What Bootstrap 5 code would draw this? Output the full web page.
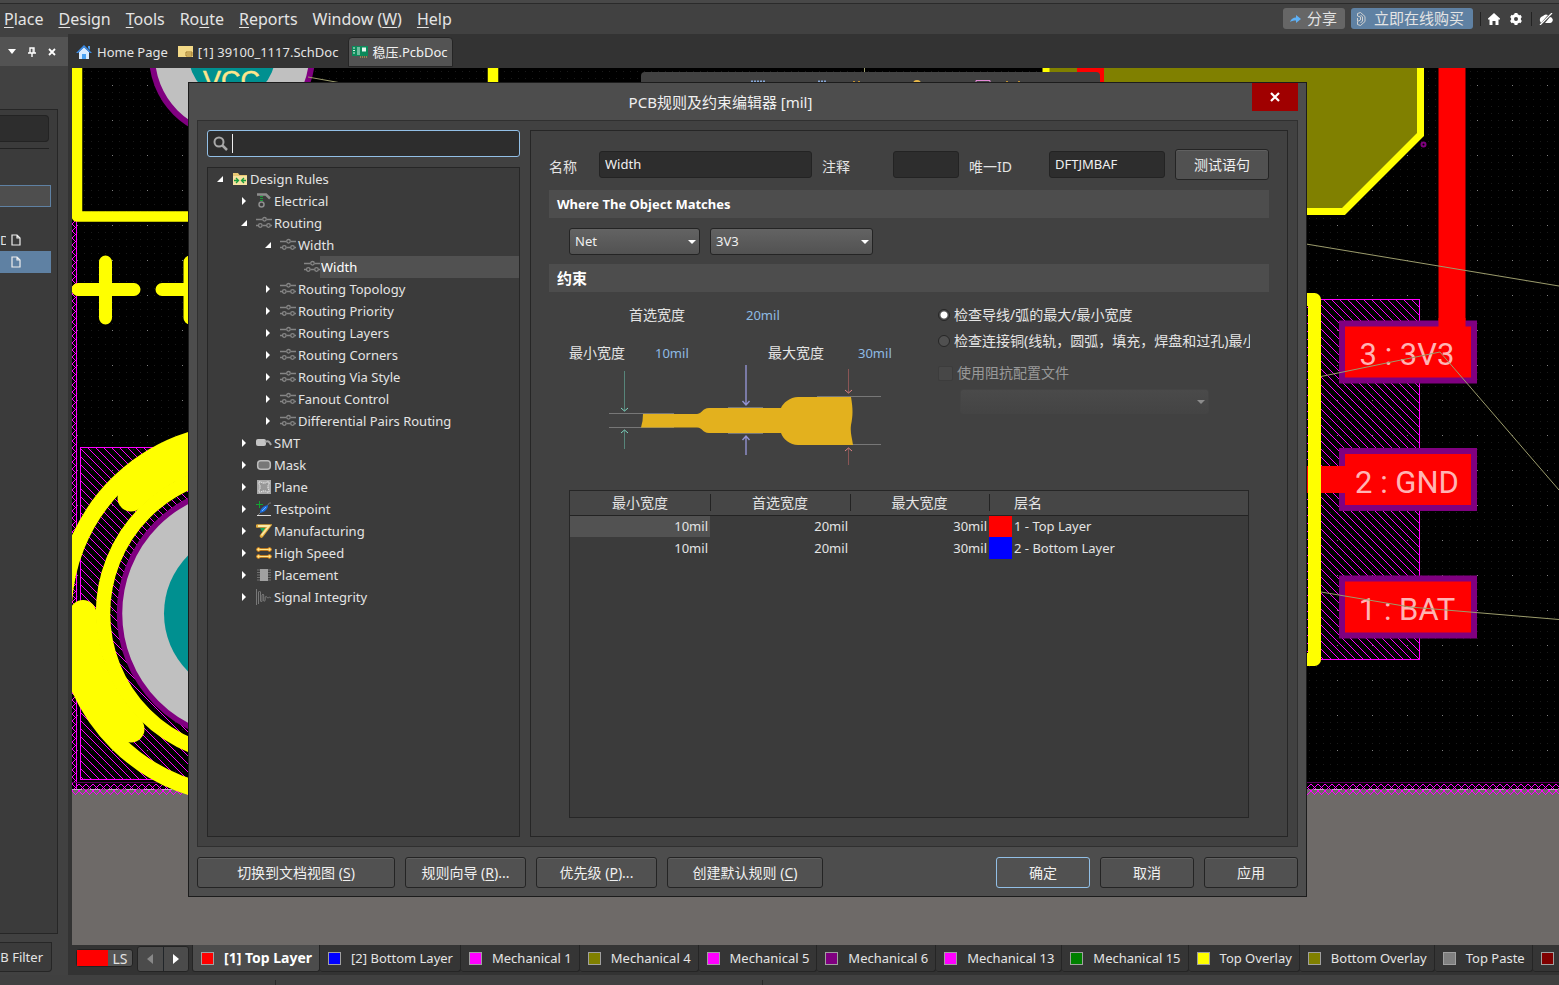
<!DOCTYPE html>
<html lang="zh-CN">
<head>
<meta charset="utf-8">
<meta name="viewport" content="width=device-width, initial-scale=1">
<title>PCB规则及约束编辑器</title>
<link href="https://cdn.jsdelivr.net/npm/bootstrap@5.3.0/dist/css/bootstrap.min.css" rel="stylesheet">
<style>
  :root { --ink:#e4e4e4; --line:#262626; --chrome:#414141; --deep:#333; --panel:#3b3b3b; --raised:#4d4d4d; --steel:#5f81a3; }
  body { font-family:"Noto Sans","Noto Sans CJK SC",sans-serif; font-size:13px; line-height:20px; color:var(--ink); background:var(--deep); }
  a { color:inherit; text-decoration:none; }
  .zh { font-size:14px; }
  .menubar { height:34px; background:var(--chrome); border-top:3px solid #484848; box-shadow:inset 0 1px #2a2a2a; font-size:16px; padding:0 6px 0 4px; }
  .menubar .menu-list { gap:15px; }
  .pill { height:21px; border:0; border-radius:3px; color:var(--ink); background:#666; padding:0 8px 0 7px; font-size:15px; line-height:21px; gap:6px; }
  .pill-buy { background:var(--steel); padding:0 9px 0 4px; gap:7px; margin-left:6px; }
  .bar-sep { width:1px; height:14px; background:#222; margin:0 7px; }
  .side { width:68px; background:var(--chrome); }
  .side-head { height:29px; margin-top:3px; background:#535353; }
  .side-body { width:58px; margin:43px 0 8px; padding-top:5px; background:var(--panel); border:1px solid var(--line); border-left:0; }
  .side-body input { display:block; height:27px; width:49px; background:#2d2d2d; border:1px solid #232323; border-left:0; border-radius:0 4px 4px 0; }
  .side-rule { height:1px; margin:6px 8px 0 0; background:#222; }
  .side-pick { width:51px; height:22px; background:#4e4e4e; border:1px solid var(--steel); border-left:0; margin:36px 0 22px; }
  .side-row { width:51px; height:22px; padding-left:11px; }
  .side-name { width:6px; margin-left:-11px; margin-right:5px; }
  .side-tab { width:52px; height:30px; margin-bottom:3px; background:var(--panel); border:1px solid var(--line); border-radius:0 0 4px 0; border-left:0; white-space:nowrap; }
  .doc-tabs { height:34px; padding:3px 0 0 8px; background:var(--deep); }
  .doc-tab { height:30px; gap:5px; margin-right:10px; }
  .doc-tab.on { background:#535353; border:1px solid #252525; border-radius:4px 4px 0 0; padding:0 4px 0 3px; gap:4px; color:#f2f2f2; }
  .board { margin-left:4px; min-height:0; background:#6e6a68; }
  .board svg { display:block; width:100%; height:100%; }
  .layers { height:30px; margin-left:4px; padding-left:4px; background:var(--deep); }
  .ls-box { height:18px; margin-top:4px; width:57px; border:1px solid #222; border-radius:3px; background:#555; line-height:17px; }
  .ls-box i { width:31px; background:#f00; }
  .stepper { width:52px; height:26px; margin:1px 3px 0 4px; background:#4b4b4b; border:1px solid #242424; border-radius:3px; }
  .stepper button { display:flex; align-items:center; justify-content:center; background:none; border:0; color:#fff; }
  .layer-tab { height:27px; padding:0 7px 0 8px; gap:10px; border:1px solid #252525; border-top:0; border-left:0; border-radius:0 0 3px 3px; background:#353535; white-space:nowrap; flex:none; }
  .layer-tab.on { background:#4c4c4c; color:#fff; font-weight:700; border-left:1px solid #252525; font-size:14px; }
  .chip { width:13px; height:13px; border:1px solid #a0a0a0; }
  .status { height:10px; background:#404040; }
  .status i { width:1px; margin-top:5px; background:#2a2a2a; }

  .dlg { position:absolute; left:188px; right:252px; top:82px; bottom:88px; background:var(--raised); border:1px solid #1c1c1c; padding:0 8px 8px; }
  .dlg-head { height:37px; padding-right:54px; }
  .dlg-title { font-size:15px; color:#f0f0f0; }
  .dlg-close { position:absolute; right:8px; top:0; width:46px; height:28px; background:#a00000; border:0; display:flex; align-items:center; justify-content:center; }
  .dlg-frame { background:var(--chrome); border:1px solid #303030; padding:9px; gap:10px; min-height:0; }
  .left-col { width:313px; gap:10px; }
  .search { height:27px; background:#2d2d2d; border:1px solid #92bfe6; border-radius:3px; padding-left:5px; gap:4px; }
  .search input { background:none; border:0; outline:0; color:#fff; min-width:0; }
  .caret { width:1px; height:19px; background:#eee; }
  .tree { background:var(--panel); border:1px solid var(--line); }
  .tree ul { list-style:none; margin:0; padding-left:24px; }
  .tree > ul { padding-left:8px; }
  .node { height:22px; }
  .node svg { flex:none; }
  .node .twig { width:8px; height:8px; margin:0 8px 0 0; }
  .node a { padding-left:2px; white-space:nowrap; flex-grow:1; line-height:22px; }
  .node a.sel { background:#515151; color:#fff; padding-left:1px; }
  .props { border:1px solid var(--line); padding:18px; }
  .f-row { gap:10px; }
  .fld { background:#2d2d2d; border:1px solid #232323; border-radius:3px; height:27px; color:#f0f0f0; padding:0 5px 1px; min-width:0; }
  .f-row label { padding-top:4px; flex:none; }
  .btn-flat { height:31px; padding:0; border:1px solid #242424; border-radius:3px; background:#515151; box-shadow:inset 0 1px #606060; color:#f0f0f0; font-size:14px; line-height:20px; }
  .btn-flat:hover { background:#5a5a5a; color:#fff; }
  .btn-ok { border-color:#92bfe6; box-shadow:none; }
  .sect { height:28px; margin:0; padding-left:8px; background:var(--raised); color:#fff; font-size:13px; line-height:28px; font-weight:700; }
  .sect.zh { font-size:15px; }
  .pick { height:27px; appearance:none; border:1px solid #242424; border-radius:3px; color:#f0f0f0; padding:0 5px 1px;
    background:url("data:image/svg+xml,%3Csvg xmlns='http://www.w3.org/2000/svg' width='8' height='4'%3E%3Cpath d='M0 0h8L4 4z' fill='%23fff'/%3E%3C/svg%3E") no-repeat right 3px center, linear-gradient(#636363,#525252); }
  .pick:disabled { height:25px; width:249px; margin:5px 0 0 22px; opacity:1; border-color:#444;
    background:url("data:image/svg+xml,%3Csvg xmlns='http://www.w3.org/2000/svg' width='8' height='4'%3E%3Cpath d='M0 0h8L4 4z' fill='%238c8c8c'/%3E%3C/svg%3E") no-repeat right 3px center, linear-gradient(#4a4a4a,#444); }
  .widths { width:369px; }
  .w-row { height:22px; }
  .w-row input { background:none; border:0; padding:0; color:#8fbbe4; width:44px; }
  .checks { min-width:0; overflow:hidden; white-space:nowrap; margin-right:19px; }
  .dot { appearance:none; width:12px; height:12px; margin:0; border-radius:50%; background:#505050; border:1px solid #262626; flex:none; }
  .dot:checked { background:radial-gradient(circle,#fff 0 3px,#505050 4px); }
  .tick { appearance:none; width:15px; height:15px; margin:0; border-radius:2px; background:#474747; border:1px solid #3c3c3c; flex:none; }
  .opt { height:22px; gap:4px; }
  .grid-box { margin:0 20px; border:1px solid var(--line); background:var(--panel); }
  .grid-box table { width:100%; table-layout:fixed; border-collapse:collapse; }
  .grid-box th { position:relative; height:24px; padding:0; font-weight:400; font-size:14px; text-align:center; background:#464646; border-bottom:1px solid #232323; line-height:22px; }
  .grid-box th + th { background:linear-gradient(#232323,#232323) no-repeat left center/1px 17px #464646; }
  .grid-box td { height:22px; padding:0 2px; text-align:right; line-height:21px; }
  .grid-box td:last-child, .grid-box th:last-child { text-align:left; padding-left:2px; }
  .grid-box th:last-child { background:#464646; }
  .dlg-foot { padding-top:10px; gap:10px; }
  .b-xl { width:198px; } .b-lg { width:156px; } .b-md { width:121px; } .b-sm { width:94px; }
  u { text-underline-offset:2px; }
</style>
</head>
<body class="vh-100 d-flex flex-column overflow-hidden position-relative">

<svg width="0" height="0" class="position-absolute" aria-hidden="true">
  <symbol id="open" viewBox="0 0 8 8"><path d="M7 1v6H1z" fill="#fff"/></symbol>
  <symbol id="shut" viewBox="0 0 8 8"><path d="M2 0L6 4 2 8z" fill="#fff"/></symbol>
  <symbol id="net" viewBox="0 0 16 16"><g fill="none" stroke="#858585" stroke-width="1.300"><path d="M0 4.500h6M11 4.500h5M0 10.500h2M6.500 10.500h4M14.500 10.500h1.500"/><circle cx="8.500" cy="4.300" r="1.800"/><circle cx="4.300" cy="10.500" r="1.800"/><circle cx="12.500" cy="10.500" r="1.800"/></g></symbol>
  <symbol id="doc" viewBox="0 0 10 12"><path d="M1 1h5l3 3v7H1zM6 1v3h3" fill="none" stroke="#eee" stroke-width="1.200"/></symbol>
</svg>

<header class="menubar d-flex align-items-center justify-content-between flex-shrink-0">
  <nav class="menu-list d-flex">
    <a href="#"><u>P</u>lace</a><a href="#"><u>D</u>esign</a><a href="#"><u>T</u>ools</a><a href="#">Ro<u>u</u>te</a><a href="#"><u>R</u>eports</a><a href="#">Window (<u>W</u>)</a><a href="#"><u>H</u>elp</a>
  </nav>
  <div class="d-flex align-items-center">
    <button class="pill d-flex align-items-center"><svg width="11" height="10" viewBox="0 0 11 10"><path d="M0 8c1-3 3-4.500 6-4.500V1l5 4-5 4V6.500C3 6.500 2 7 0 8z" fill="#5eb0f5"/></svg>分享</button>
    <button class="pill pill-buy d-flex align-items-center"><svg width="12" height="14" viewBox="0 0 12 14"><g fill="none" stroke="#d0d0d0"><path d="M2.500 1.500l3-1 4.500 4v5l-4.500 4-3-1v-3l3-1.500v-3l-3-1z"/><path d="M2.500 6v3M5.500 3l2 2v4l-2 2"/></g></svg>立即在线购买</button>
    <i class="bar-sep"></i>
    <svg width="12" height="12" viewBox="0 0 12 12"><path d="M6 0l6 5.500v1H10.500V12h-3V8h-3v4h-3V6.500H0v-1z" fill="#fff"/></svg>
    <svg class="ms-2" width="16" height="14" viewBox="-2 -1 16 14"><g transform="translate(6 6)"><circle r="3.500" fill="none" stroke="#fff" stroke-width="3"/><g stroke="#fff" stroke-width="3"><path d="M0-6v2M0 4v2M-5.200-3l1.700 1M3.500 2l1.700 1M-5.200 3l1.700-1M3.500-2l1.700-1"/></g></g></svg>
    <i class="bar-sep"></i>
    <svg width="14" height="12" viewBox="0 0 14 12"><path d="M1 8a4 4 0 013-5 4 4 0 015-1L2 10zM6 10l5-6a3 3 0 012 5 3 3 0 01-2 1z" fill="#fff"/><path d="M1 12L13 0" stroke="#fff" stroke-width="1.200"/></svg>
  </div>
</header>

<div class="d-flex flex-grow-1" style="min-height:0">
  <aside class="side d-flex flex-column flex-shrink-0">
    <div class="side-head d-flex align-items-center justify-content-end gap-2 pe-2">
      <svg width="8" height="5" viewBox="0 0 8 5"><path d="M0 0h8L4 5z" fill="#fff"/></svg>
      <svg class="mx-1" width="8" height="10" viewBox="0 0 8 10"><path d="M2 1h4v5H2zM0 6h8M4 6v4" stroke="#fff" fill="none" stroke-width="1.400"/><path d="M5 1v5" stroke="#fff"/></svg>
      <svg class="me-1" width="8" height="8" viewBox="0 0 8 8"><path d="M1 1l6 6M7 1L1 7" stroke="#fff" stroke-width="1.800"/></svg>
    </div>
    <div class="side-body flex-grow-1 overflow-hidden">
      <input type="text" aria-label="Mask">
      <div class="side-rule"></div>
      <div class="side-pick"></div>
      <div class="side-row d-flex align-items-center"><span class="side-name overflow-hidden">Dc</span><svg width="10" height="12"><use href="#doc"/></svg></div>
      <div class="side-row d-flex align-items-center" style="background:#5f81a3"><svg width="10" height="12"><use href="#doc"/></svg></div>
    </div>
    <div class="side-tab d-flex align-items-center justify-content-end overflow-hidden pe-2"><a href="#">PCB Filter</a></div>
  </aside>

  <main class="d-flex flex-column flex-grow-1" style="min-width:0">
    <nav class="doc-tabs d-flex flex-shrink-0">
      <a href="#" class="doc-tab d-flex align-items-center"><svg width="16" height="16" viewBox="0 0 16 16"><path d="M3 8v7h10V8L8 3z" fill="#d9ecff"/><path d="M12 2h2v4l-2-2z" fill="#4d9bea"/><path d="M8 1L0 9h2l6-5.500L14 9h2z" fill="#3b8be6"/><path d="M6 10h4v5H6z" fill="#4da3f2"/></svg>Home Page</a>
      <a href="#" class="doc-tab d-flex align-items-center"><svg width="15" height="12" viewBox="0 0 15 12"><path d="M0 0h15v11H0z" fill="#f3d987"/><path d="M8 6h6v4H8zM9 8h5" fill="none" stroke="#a07a2c"/></svg>[1] 39100_1117.SchDoc</a>
      <a href="#" class="doc-tab on d-flex align-items-center"><svg width="16" height="12" viewBox="0 0 16 12"><path d="M0 0h16v10H0z" fill="#0c8a5a"/><path d="M10 1.500h4v4h-4z" fill="#e8f5ee"/><path d="M1 2h2M1 4.500h2M1 7h2M5 2h3M5 4h3M5 6h3M5 8h3" stroke="#d5efe2"/><path d="M8 11h7" stroke="#d9c34b" stroke-dasharray="1 1"/></svg><span>稳压.PcbDoc</span></a>
    </nav>

    <div class="board flex-grow-1 overflow-hidden">
      <svg viewBox="72 68 1487 877" preserveAspectRatio="xMinYMin slice" role="img" aria-label="PCB">
        <defs>
          <pattern id="fine" x="112" y="85" width="7" height="7" patternUnits="userSpaceOnUse"><rect width="1" height="1" fill="#1a1a1a"/></pattern>
          <pattern id="coarse" x="112" y="85" width="35" height="35" patternUnits="userSpaceOnUse"><rect width="1" height="1" fill="#808080"/></pattern>
          <pattern id="hatch" width="8" height="8" patternUnits="userSpaceOnUse"><path d="M-1-1l10 10M-1 7l2 2M7-1l2 2" stroke="#f0f"/></pattern>
          <pattern id="cross" x="72" y="784" width="7" height="7" patternUnits="userSpaceOnUse"><path d="M0 0l7 7M7 0L0 7" stroke="#f0f"/></pattern>
        </defs>
        <path d="M72 68H1559V789H72z"/>
        <path d="M72 68H1559V784H72z" fill="url(#fine)"/>
        <path d="M72 68H1559V784H72z" fill="url(#coarse)"/>
        <rect x="72" y="221" width="5" height="568" fill="url(#cross)"/>
        <path d="M76.500 221V789" stroke="#f0f"/>
        <rect x="72" y="784" width="1487" height="11" fill="url(#cross)"/>
        <path d="M72 782.500H1559" stroke="#5a005a"/><path d="M72 789.500H1559" stroke="#c9a0c9" stroke-dasharray="10 8"/>
        <path d="M493 60V216.500H77V60" fill="none" stroke="#ff0" stroke-width="10.500" stroke-linejoin="round"/>
        <circle cx="232" cy="56" r="80" fill="#c0c0c0" stroke="#800080" stroke-width="6"/>
        <circle cx="232" cy="56" r="43" fill="#009090"/>
        <text x="203" y="90" font-family="Liberation Sans" font-size="27" fill="#ffe68c" stroke="#ffe68c" stroke-width=".5">VCC</text>
        <path d="M308 77l50 9" stroke="#9c9c6c"/>
        <path d="M78 289.500h56M105.500 262v56M162 289.500h56M190 262v56" stroke="#ff0" stroke-width="13" stroke-linecap="round"/>
        <rect x="80.500" y="447.500" width="300" height="332" fill="url(#hatch)" stroke="#f0f"/>
        <g fill="none" stroke="#ff0">
          <circle cx="246" cy="613.500" r="182.500" stroke-width="16.500"/>
          <circle cx="246" cy="613.500" r="143" stroke-width="14.500"/>
          <path d="M131 498A163 163 0 01246 450.500M83 613.500A163 163 0 00131 729" stroke-width="27" stroke-linecap="round"/>
        </g>
        <circle cx="246" cy="613.500" r="126.500" fill="#c0c0c0" stroke="#800080" stroke-width="5.500"/>
        <circle cx="246" cy="613.500" r="82" fill="#009090"/>

        <path d="M1046 50H1420.500V134.500L1343.500 211.500H1046z" fill="#808000" stroke="#ff0" stroke-width="7"/>
        <path d="M1077 68h27v14h-27zM1438.500 68h27v262h-27z" fill="red"/>
        <circle cx="1423.500" cy="144.500" r="2" fill="none" stroke="#800080" stroke-width="2"/>
        <path d="M864.500 68v5" stroke="#9c9c6c"/>
        <rect x="641" y="72" width="459" height="20" rx="4" fill="#414141"/>
        <g fill="none"><path d="M751 81.500h14M818 81.500h9" stroke="#88a8d8" stroke-width="2" stroke-dasharray="2 1"/><path d="M976 84v-3.500h14v3.500" stroke="#e58ad8"/><path d="M853 81.500h8M1006 81.500h5M1018 81.500h5" stroke="#c09030" stroke-dasharray="2 3"/></g><circle cx="917" cy="84" r="4" fill="#e8b84a"/>
        <path d="M1300 243l259 43" stroke="#9c9c6c"/>
        <rect x="1300.500" y="299.500" width="119" height="360" fill="url(#hatch)" stroke="#f0f"/>
        <path d="M1300 466h50v27h-50z" fill="red"/>
        <path d="M1300 299.500h14.500V659.500H1300" fill="none" stroke="#ff0" stroke-width="13" stroke-linejoin="round"/>
        <g fill="red" stroke="#800080" stroke-width="6"><rect x="1342" y="323.500" width="132" height="57"/><rect x="1342" y="451" width="132" height="57"/><rect x="1342" y="578.500" width="132" height="57"/></g>
        <path d="M1438.500 318h27v14h-27zM1336 466h12v27h-12z" fill="red"/>
        <g font-family="Roboto, Liberation Sans" font-size="31" fill="#ffb4b4" text-anchor="middle"><text x="1407" y="365">3 : 3V3</text><text x="1407" y="493">2 : GND</text><text x="1407" y="620">1 : BAT</text></g>
        <path d="M1321 376.500L1440 352l119 138M1321 592l89 15 149 12.500" fill="none" stroke="#9c9c6c"/>
      </svg>
    </div>

    <nav class="layers d-flex flex-shrink-0">
      <div class="ls-box d-flex flex-shrink-0"><i></i><span class="flex-grow-1 text-center zh">LS</span></div>
      <div class="stepper d-flex flex-shrink-0">
        <button class="flex-fill p-0" aria-label="prev"><svg width="6" height="10" viewBox="0 0 6 10"><path d="M6 0v10L0 5z" fill="#888"/></svg></button>
        <button class="flex-fill p-0 border-start border-dark" aria-label="next"><svg width="6" height="10" viewBox="0 0 6 10"><path d="M0 0v10l6-5z" fill="#fff"/></svg></button>
      </div>
      <a href="#" class="layer-tab on d-flex align-items-center"><i class="chip" style="background:#f00"></i>[1] Top Layer</a>
      <a href="#" class="layer-tab d-flex align-items-center"><i class="chip" style="background:#00f"></i>[2] Bottom Layer</a>
      <a href="#" class="layer-tab d-flex align-items-center"><i class="chip" style="background:#f0f"></i>Mechanical 1</a>
      <a href="#" class="layer-tab d-flex align-items-center"><i class="chip" style="background:#808000"></i>Mechanical 4</a>
      <a href="#" class="layer-tab d-flex align-items-center"><i class="chip" style="background:#f0f"></i>Mechanical 5</a>
      <a href="#" class="layer-tab d-flex align-items-center"><i class="chip" style="background:#800080"></i>Mechanical 6</a>
      <a href="#" class="layer-tab d-flex align-items-center"><i class="chip" style="background:#f0f"></i>Mechanical 13</a>
      <a href="#" class="layer-tab d-flex align-items-center"><i class="chip" style="background:#008000"></i>Mechanical 15</a>
      <a href="#" class="layer-tab d-flex align-items-center"><i class="chip" style="background:#ff0"></i>Top Overlay</a>
      <a href="#" class="layer-tab d-flex align-items-center"><i class="chip" style="background:#808000"></i>Bottom Overlay</a>
      <a href="#" class="layer-tab d-flex align-items-center"><i class="chip" style="background:#808080"></i>Top Paste</a>
      <a href="#" class="layer-tab d-flex align-items-center"><i class="chip" style="background:#800000"></i></a>
    </nav>
  </main>
</div>
<footer class="status flex-shrink-0 d-flex"><i style="margin-left:275px"></i><i style="margin-left:486px"></i></footer>

<section class="dlg d-flex flex-column" role="dialog" aria-labelledby="dlgTitle">
  <div class="dlg-head d-flex align-items-center justify-content-center">
    <span class="dlg-title" id="dlgTitle">PCB规则及约束编辑器 [mil]</span>
    <button class="dlg-close" aria-label="关闭"><svg width="10" height="10" viewBox="0 0 10 10"><path d="M1 1l8 8M9 1L1 9" stroke="#fff" stroke-width="2.200"/></svg></button>
  </div>
  <div class="dlg-frame d-flex flex-grow-1">
    <div class="left-col d-flex flex-column flex-shrink-0">
      <label class="search d-flex align-items-center"><svg width="15" height="15" viewBox="0 0 15 15"><circle cx="6" cy="6" r="4.500" fill="none" stroke="#a8a8a8" stroke-width="2"/><path d="M9.500 9.500L14 14" stroke="#a8a8a8" stroke-width="2.500"/></svg><i class="caret"></i><input type="text" class="flex-grow-1 p-0" aria-label="搜索"></label>
      <div class="tree flex-grow-1 overflow-hidden">
        <ul>
          <li>
            <div class="node d-flex align-items-center"><svg class="twig"><use href="#open"/></svg><svg width="16" height="16" viewBox="0 0 16 16"><path d="M1 2h5l1.500 2H15v10H1z" fill="#e9c873"/><path d="M1 5h14v9H1z" fill="#f8e2a0"/><path d="M2 9.500h4M4 7l2.500 2.500L4 12M14 9.500H10M12 7L9.500 9.500l2.500 2.500" stroke="#1a9a3a" stroke-width="1.300" fill="none"/></svg><a href="#">Design Rules</a></div>
            <ul>
              <li><div class="node d-flex align-items-center"><svg class="twig"><use href="#shut"/></svg><svg width="16" height="16" viewBox="0 0 16 16"><path d="M1 1.500h9l4 4" stroke="#8e8e8e" stroke-width="2.500" fill="none"/><path d="M5.500 3v5" stroke="#1e9a3c" stroke-width="3" stroke-dasharray="1 1"/><circle cx="5.500" cy="11.500" r="2.500" fill="none" stroke="#8e8e8e" stroke-width="1.500"/></svg><a href="#">Electrical</a></div></li>
              <li><div class="node d-flex align-items-center"><svg class="twig"><use href="#open"/></svg><svg width="16" height="16"><use href="#net"/></svg><a href="#">Routing</a></div>
                <ul>
                  <li><div class="node d-flex align-items-center"><svg class="twig"><use href="#open"/></svg><svg width="16" height="16"><use href="#net"/></svg><a href="#">Width</a></div>
                    <ul><li><div class="node d-flex align-items-center"><svg class="twig"></svg><svg width="16" height="16"><use href="#net"/></svg><a href="#" class="sel">Width</a></div></li></ul>
                  </li>
                  <li><div class="node d-flex align-items-center"><svg class="twig"><use href="#shut"/></svg><svg width="16" height="16"><use href="#net"/></svg><a href="#">Routing Topology</a></div></li>
                  <li><div class="node d-flex align-items-center"><svg class="twig"><use href="#shut"/></svg><svg width="16" height="16"><use href="#net"/></svg><a href="#">Routing Priority</a></div></li>
                  <li><div class="node d-flex align-items-center"><svg class="twig"><use href="#shut"/></svg><svg width="16" height="16"><use href="#net"/></svg><a href="#">Routing Layers</a></div></li>
                  <li><div class="node d-flex align-items-center"><svg class="twig"><use href="#shut"/></svg><svg width="16" height="16"><use href="#net"/></svg><a href="#">Routing Corners</a></div></li>
                  <li><div class="node d-flex align-items-center"><svg class="twig"><use href="#shut"/></svg><svg width="16" height="16"><use href="#net"/></svg><a href="#">Routing Via Style</a></div></li>
                  <li><div class="node d-flex align-items-center"><svg class="twig"><use href="#shut"/></svg><svg width="16" height="16"><use href="#net"/></svg><a href="#">Fanout Control</a></div></li>
                  <li><div class="node d-flex align-items-center"><svg class="twig"><use href="#shut"/></svg><svg width="16" height="16"><use href="#net"/></svg><a href="#">Differential Pairs Routing</a></div></li>
                </ul>
              </li>
              <li><div class="node d-flex align-items-center"><svg class="twig"><use href="#shut"/></svg><svg width="16" height="16" viewBox="0 0 16 16"><rect y="4" width="10" height="7" rx="2" fill="#c4c4c4"/><path d="M9 7c4-2 5 1 6 3" fill="none" stroke="#a5a5a5" stroke-width="2"/></svg><a href="#">SMT</a></div></li>
              <li><div class="node d-flex align-items-center"><svg class="twig"><use href="#shut"/></svg><svg width="16" height="16" viewBox="0 0 16 16"><rect x="1.700" y="3.700" width="12.600" height="8.600" rx="3" fill="#777" stroke="#bbb" stroke-width="1.500"/></svg><a href="#">Mask</a></div></li>
              <li><div class="node d-flex align-items-center"><svg class="twig"><use href="#shut"/></svg><svg width="16" height="16" viewBox="0 0 16 16"><path d="M1 1h14v14H1z" fill="#a9a9a9"/><path d="M3 3h2l1.500 1h3L11 3h2v2l-1 1.500v3l1 1.500v2h-2l-1.500-1h-3L5 13H3v-2l1-1.500v-3L3 5z" fill="#989898" stroke="#f0f0f0" stroke-dasharray="1.500 .7"/></svg><a href="#">Plane</a></div></li>
              <li><div class="node d-flex align-items-center"><svg class="twig"><use href="#shut"/></svg><svg width="16" height="16" viewBox="0 0 16 16"><path d="M3.500 0v7M0 3.500h7" stroke="#12a532"/><path d="M4 12c0-4 3-7 8-8 0 4-3 7-8 8z" fill="#1d6fe0"/><path d="M6 10l4-4" stroke="#6db4ff"/><path d="M12 4c0-2 2-2 3-2M2 14l2-2" stroke="#777" fill="none"/><path d="M1 14.500h14" stroke="#ddd"/></svg><a href="#">Testpoint</a></div></li>
              <li><div class="node d-flex align-items-center"><svg class="twig"><use href="#shut"/></svg><svg width="16" height="16" viewBox="0 0 16 16"><path d="M4 5h6l-3 5z" fill="#18a55a"/><path d="M1.500 3H13L5.500 13" fill="none" stroke="#e0a93a" stroke-width="3.600" stroke-linecap="round"/><path d="M2 3h11L5.500 12.500" fill="none" stroke="#fbe9a6" stroke-width="1.800"/></svg><a href="#">Manufacturing</a></div></li>
              <li><div class="node d-flex align-items-center"><svg class="twig"><use href="#shut"/></svg><svg width="16" height="16" viewBox="0 0 16 16"><g stroke="#e88f1a" fill="#ffe58a"><path d="M2 4.500h12M2 11.500h12" stroke-width="2.500"/><circle cx="2.500" cy="4.500" r="1.800"/><circle cx="13.500" cy="4.500" r="1.800"/><circle cx="2.500" cy="11.500" r="1.800"/><circle cx="13.500" cy="11.500" r="1.800"/></g><path d="M4 4.500h8M4 11.500h8" stroke="#ffe58a"/></svg><a href="#">High Speed</a></div></li>
              <li><div class="node d-flex align-items-center"><svg class="twig"><use href="#shut"/></svg><svg width="16" height="16" viewBox="0 0 16 16"><path d="M1 3h14M1 5.500h14M1 8h14M1 10.500h14M1 13h14" stroke="#707070"/><path d="M4 2h8v12H4z" fill="#a0a0a0"/></svg><a href="#">Placement</a></div></li>
              <li><div class="node d-flex align-items-center"><svg class="twig"><use href="#shut"/></svg><svg width="16" height="16" viewBox="0 0 16 16"><path d="M.5 0v16M2.500 15V3q1-2 2 0v9q1 2 1.500 0V6q1-2 1.700 0v6q1 1 1.500-1V8q1-1.500 1.700 0t1.500 1l1-1 1.500 1" fill="none" stroke="#777"/></svg><a href="#">Signal Integrity</a></div></li>
            </ul>
          </li>
        </ul>
      </div>
    </div>

    <form class="props d-flex flex-column flex-grow-1" style="min-width:0">
      <div class="f-row d-flex align-items-center">
        <label class="zh" style="width:40px" for="nm">名称</label><input class="fld flex-grow-1" id="nm" value="Width">
        <label class="zh" style="width:61px" for="cm">注释</label><input class="fld" id="cm" style="width:66px">
        <label class="zh" style="width:70px" for="uid">唯一ID</label><input class="fld" id="uid" value="DFTJMBAF" style="width:116px">
        <button type="button" class="btn btn-flat b-sm">测试语句</button>
      </div>
      <h2 class="sect" style="margin-top:10px">Where The Object Matches</h2>
      <div class="d-flex" style="margin:10px 0 9px 20px;gap:10px">
        <select class="pick" style="width:131px" aria-label="Scope"><option>Net</option></select>
        <select class="pick" style="width:163px" aria-label="Net"><option>3V3</option></select>
      </div>
      <h2 class="sect zh">约束</h2>
      <div class="d-flex" style="padding:12px 0 20px 20px">
        <div class="widths flex-shrink-0">
          <div class="w-row d-flex align-items-center" style="margin:0 0 16px 60px"><label class="zh" style="width:117px" for="wp">首选宽度</label><input id="wp" value="20mil"></div>
          <div class="w-row d-flex align-items-center"><label class="zh" style="width:86px" for="wn">最小宽度</label><input id="wn" value="10mil"><label class="zh" style="width:90px;margin-left:69px" for="wx">最大宽度</label><input id="wx" value="30mil"></div>
          <svg class="d-block" width="320" height="106" viewBox="569 364 320 106">
            <path d="M609 413.500h65M609 427.500h65M728 407.500h35M728 433.500h35M817 396.500h64M817 444.500h64" stroke="#777"/>
            <path d="M641 427.500q2-6 2-13.500h54c6-1 5-5.500 12-6h72c2-5 9-11 17-11h53c2 12 2 18 0 28-1 8 1 12 2 20h-55c-8 0-15-6-17-12h-72c-7-.5-6-5-12-5.500z" fill="#e3b11e"/>
            <g fill="none"><path d="M624.500 371v40M624.500 449v-19" stroke="#57857a"/><path d="M621 408l3.500 3 3.500-3M621 433l3.500-3 3.500 3" stroke="#7fd6c2"/>
            <path d="M746 365v40M746 455v-18M742.500 401l3.500 4 3.500-4M742.500 440l3.500-4 3.500 4" stroke="#9292d0" stroke-width="1.400"/>
            <path d="M848.500 369v24M848.500 465v-17" stroke="#8a5555"/><path d="M845 390l3.500 3 3.500-3M845 451l3.500-3 3.500 3" stroke="#e08484"/></g>
          </svg>
        </div>
        <div class="checks flex-grow-1">
          <label class="opt zh d-flex align-items-center"><input class="dot" type="radio" name="chk" checked>检查导线/弧的最大/最小宽度</label>
          <label class="opt zh d-flex align-items-center mt-1"><input class="dot" type="radio" name="chk">检查连接铜(线轨，圆弧，填充，焊盘和过孔)最小/最大宽度</label>
          <label class="opt zh d-flex align-items-center" style="margin-top:10px;color:#999"><input class="tick" type="checkbox" disabled>使用阻抗配置文件</label>
          <select class="pick" disabled aria-label="阻抗配置文件"></select>
        </div>
      </div>
      <div class="grid-box flex-grow-1">
        <table>
          <colgroup><col style="width:140px"><col style="width:140px"><col style="width:139px"><col style="width:23px"><col></colgroup>
          <thead><tr><th>最小宽度</th><th>首选宽度</th><th>最大宽度</th><th></th><th>层名</th></tr></thead>
          <tbody>
            <tr><td style="background:#525252">10mil</td><td>20mil</td><td>30mil</td><td style="background:#f00"></td><td>1 - Top Layer</td></tr>
            <tr><td>10mil</td><td>20mil</td><td>30mil</td><td style="background:#00f"></td><td>2 - Bottom Layer</td></tr>
          </tbody>
        </table>
      </div>
    </form>
  </div>
  <div class="dlg-foot d-flex">
    <button class="btn btn-flat b-xl">切换到文档视图 (<u>S</u>)</button>
    <button class="btn btn-flat b-md">规则向导 (<u>R</u>)...</button>
    <button class="btn btn-flat b-md">优先级 (<u>P</u>)...</button>
    <button class="btn btn-flat b-lg">创建默认规则 (<u>C</u>)</button>
    <button class="btn btn-flat btn-ok b-sm ms-auto">确定</button>
    <button class="btn btn-flat b-sm">取消</button>
    <button class="btn btn-flat b-sm">应用</button>
  </div>
</section>
<script src="https://cdn.jsdelivr.net/npm/bootstrap@5.3.0/dist/js/bootstrap.bundle.min.js"></script>
</body>
</html>
